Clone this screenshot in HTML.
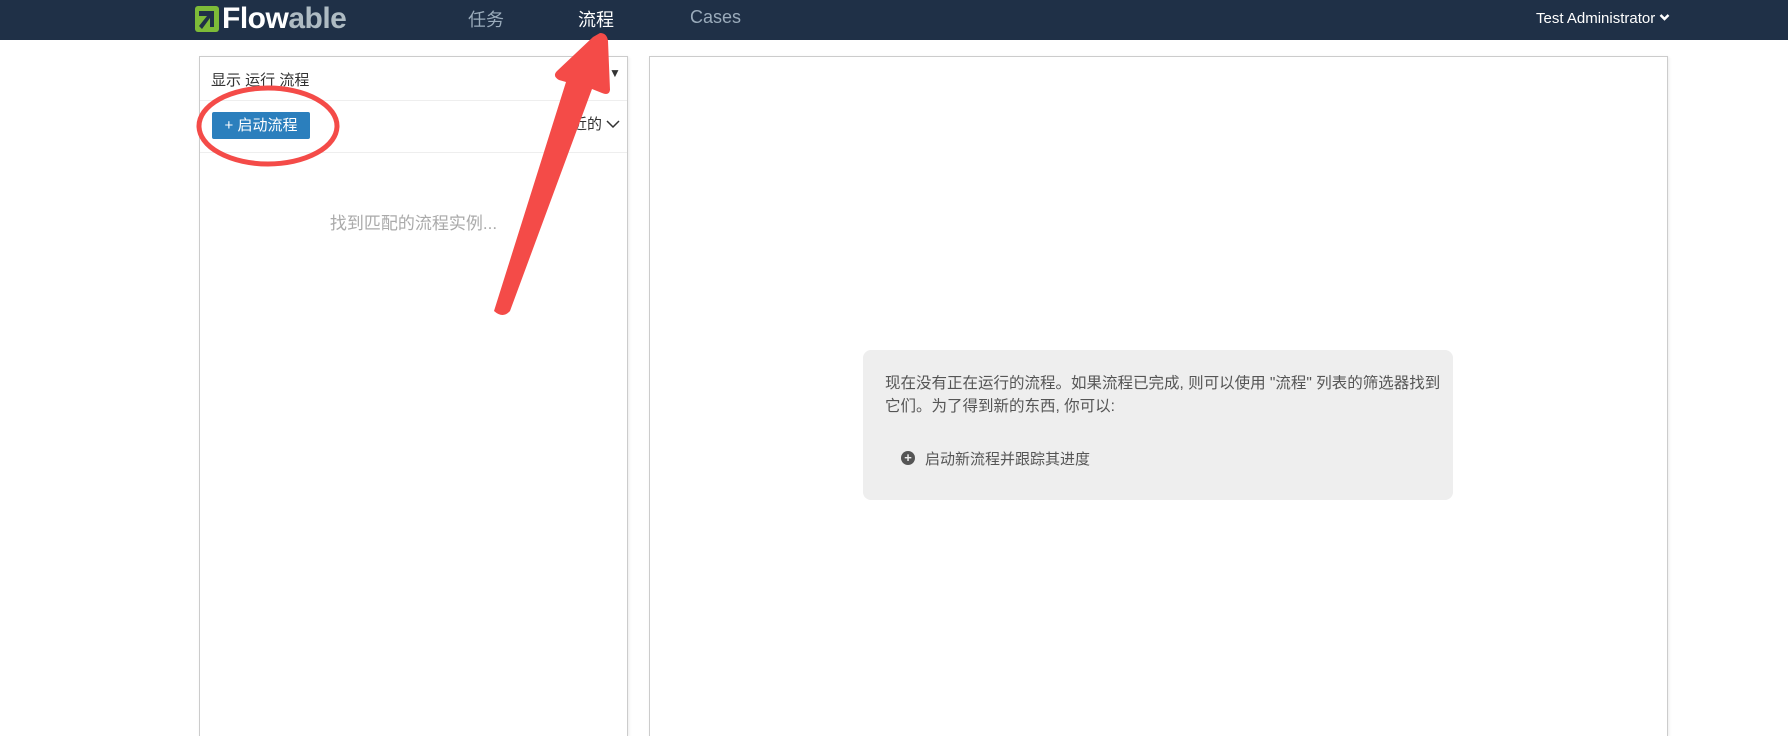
<!DOCTYPE html>
<html><head><meta charset="utf-8"><style>
*{margin:0;padding:0;box-sizing:border-box}
body{width:1788px;height:729px;overflow:hidden;background:#fff;font-family:"Liberation Sans","Noto Sans CJK SC",sans-serif;position:relative}
.nav{position:absolute;left:0;top:0;width:1788px;height:40px;background:#1f3047}
.abs{position:absolute;white-space:nowrap}
.panel{position:absolute;border:1px solid #ccc;border-bottom:none;box-shadow:1px 1px 3px rgba(0,0,0,.08)}
</style></head><body>
<div class="nav">
  <svg class="abs" style="left:194px;top:5px" width="26" height="28" viewBox="0 0 26 28">
    <rect x="1" y="1" width="24" height="26" rx="3" fill="#7dbb38"/>
    <path d="M5 6h15v16h-4V13L8 24 5 21 13 11H5z" fill="#1f3047"/>
  </svg>
  <div class="abs" style="left:222px;top:1px;font-size:30px;font-weight:bold;letter-spacing:-0.5px;color:#fff;line-height:36px">Flow<span style="color:#aebbc3">able</span></div>
  <div class="abs" style="left:468px;top:6px;font-size:18px;color:#9aabbb">任务</div>
  <div class="abs" style="left:578px;top:6px;font-size:18px;color:#fff">流程</div>
  <div class="abs" style="left:690px;top:7px;font-size:18px;color:#9aabbb">Cases</div>
  <div class="abs" style="left:1536px;top:10px;font-size:15px;color:#fff">Test Administrator <svg width="11" height="9" viewBox="0 0 11 9" style="vertical-align:1px"><path d="M1.5 2l4 4 4-4" stroke="#fff" stroke-width="2.5" fill="none"/></svg></div>
</div>
<div class="panel" style="left:199px;top:56px;width:429px;height:680px">
  <div class="abs" style="left:11px;top:12px;font-size:15px;color:#333">显示 运行 流程</div>
  <div class="abs" style="left:409px;top:9px;font-size:12px;color:#333">▼</div>
  <div style="position:absolute;left:0;top:43px;width:100%;border-top:1px solid #eee"></div>
  <div class="abs" style="left:12px;top:55px;width:98px;height:27px;background:#2b7fbd;color:#fff;font-size:15px;line-height:27px;text-align:center;border-radius:2px">+ 启动流程</div>
  <div class="abs" style="left:372px;top:56px;font-size:15px;color:#333">近的 <svg width="14" height="10" viewBox="0 0 14 10"><path d="M1 2l6 6 6-6" stroke="#333" stroke-width="1.5" fill="none"/></svg></div>
  <div style="position:absolute;left:0;top:95px;width:100%;border-top:1px solid #eee"></div>
  <div class="abs" style="left:0;width:100%;top:152px;text-align:center;font-size:17px;color:#aaa">找到匹配的流程实例...</div>
</div>
<div class="panel" style="left:649px;top:56px;width:1019px;height:680px"></div>
<div class="abs" style="left:863px;top:350px;width:590px;height:150px;background:#eee;border-radius:8px">
  <div class="abs" style="left:22px;top:22px;font-size:15.5px;line-height:23px;color:#555">现在没有正在运行的流程。如果流程已完成, 则可以使用 "流程" 列表的筛选器找到<br>它们。为了得到新的东西, 你可以:</div>
  <div class="abs" style="left:38px;top:101px;width:14px;height:14px;border-radius:50%;background:#555;color:#eee;font-size:13px;line-height:14px;text-align:center;font-weight:bold">+</div>
  <div class="abs" style="left:62px;top:98px;font-size:15px;color:#555">启动新流程并跟踪其进度</div>
</div>
<svg class="abs" style="left:0;top:0" width="1788" height="729">
  <ellipse cx="268" cy="126" rx="69" ry="38" fill="none" stroke="#f44b48" stroke-width="5"/>
  <path d="M600 33 Q607 33 608 41 L610 90 Q609 96 602 93 L592 89 L510 311 Q503 319 494 311 L566 82 L559 80 Q552 76 557 71 L593 37 Z" fill="#f44b48"/>
</svg>
</body></html>
